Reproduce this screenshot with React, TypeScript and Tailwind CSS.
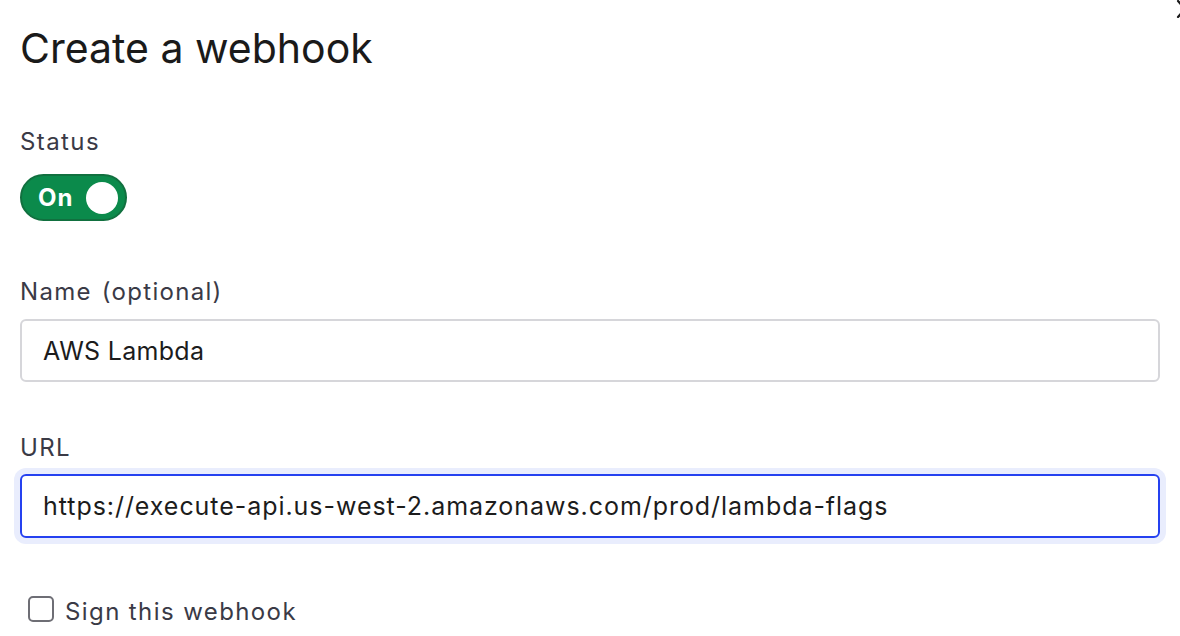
import React, { useState } from "react";

export default function App() {
  const [enabled, setEnabled] = useState(true);
  const [signed, setSigned] = useState(false);
  const [name, setName] = useState("AWS Lambda");
  const [url, setUrl] = useState(
    "https://execute-api.us-west-2.amazonaws.com/prod/lambda-flags",
  );

  return (
    <div
      className="relative h-[636px] w-[1180px] overflow-hidden bg-white px-5"
      style={{ fontFamily: "Inter, 'Noto Sans', sans-serif" }}
    >
      {/* close button, clipped at the edge */}
      <button className="absolute right-[-14px] top-0 text-[#1a1a1a]" aria-label="Close">
        <svg width="18" height="18" viewBox="0 0 18 18" fill="none" stroke="currentColor" strokeWidth="2.2" strokeLinecap="round">
          <path d="M2 1l14 16M16 1L2 17" />
        </svg>
      </button>

      <h1 className="pt-[22px] text-[41px] font-normal leading-[52px] text-[#1a1a1a]">
        Create a webhook
      </h1>

      <div className="mt-[54px] text-[24px] leading-[28px] tracking-[1.4px] text-[#3a3a46]">
        Status
      </div>
      <button
        type="button"
        onClick={() => setEnabled(!enabled)}
        className="mt-[18px] flex h-[47px] w-[107px] items-center justify-between rounded-full border-2 border-[#11703f] bg-[#0b8a4b] pl-[16px] pr-[7px]"
      >
        <span className="text-[24px] font-bold tracking-[1px] text-white">On</span>
        <span className="h-[32px] w-[32px] rounded-full bg-white" />
      </button>

      <label className="mt-[57px] block text-[24px] leading-[28px] tracking-[1.3px] text-[#3a3a46]">
        Name <span className="ml-[2px]">(optional)</span>
      </label>
      <input
        value={name}
        onChange={(e) => setName(e.target.value)}
        className="mt-[13px] block h-[63px] w-full rounded-[6px] border-2 border-[#d6d6da] pl-[21px] text-[25px] tracking-[0.3px] text-[#1c1c1c] outline-none"
      />

      <label className="mt-[52px] block text-[24px] leading-[28px] tracking-[1.3px] text-[#3a3a46]">
        URL
      </label>
      <input
        value={url}
        onChange={(e) => setUrl(e.target.value)}
        className="mt-[12px] block h-[64px] w-full rounded-[6px] border-2 border-[#2541f0] pl-[21px] text-[25px] tracking-[0.95px] text-[#1c1c1c] outline-none ring-[6px] ring-[#e9edfd]"
      />

      <label className="mt-[58px] flex items-start gap-[11px] pl-[8px]">
        <input
          type="checkbox"
          checked={signed}
          onChange={(e) => setSigned(e.target.checked)}
          className="h-[26px] w-[26px] appearance-none rounded-[5px] border-2 border-[#6e6e75] bg-white"
        />
        <span className="mt-[1px] text-[24px] leading-[29px] tracking-[1.4px] text-[#3a3a46]">
          Sign this webhook
        </span>
      </label>
    </div>
  );
}
